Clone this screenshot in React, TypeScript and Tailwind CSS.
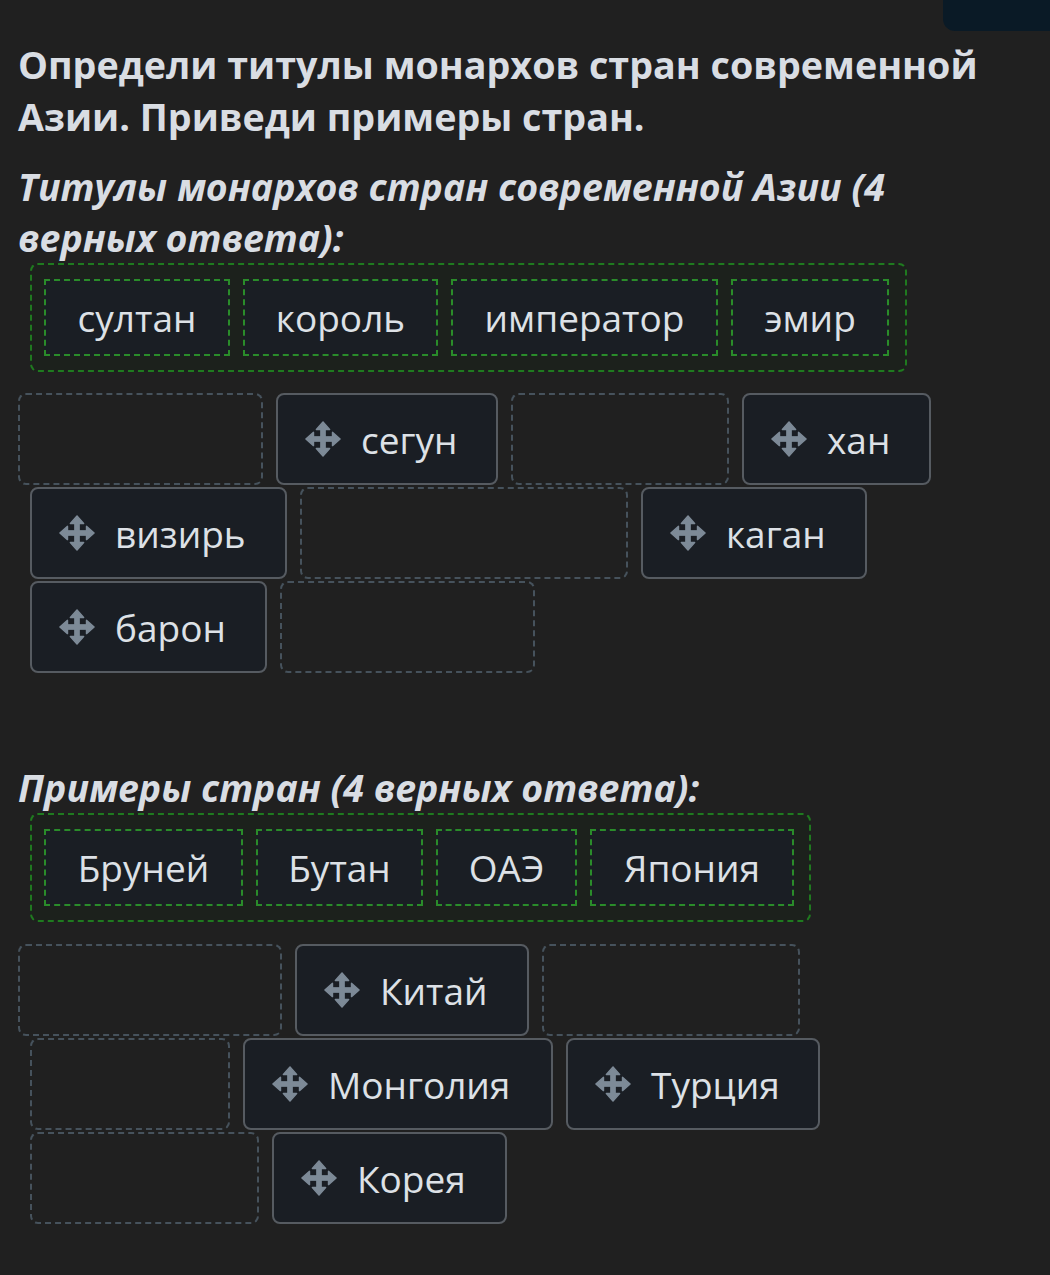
import React from "react";

type Item = { kind: "drop"; w: string } | { kind: "tile"; w: string; label: string };

const titleRows: Item[][] = [
  [
    { kind: "drop", w: "w-[245px]" },
    { kind: "tile", w: "w-[222px]", label: "сегун" },
    { kind: "drop", w: "w-[218px]" },
    { kind: "tile", w: "w-[189px]", label: "хан" },
  ],
  [
    { kind: "tile", w: "w-[257px]", label: "визирь" },
    { kind: "drop", w: "w-[328px]" },
    { kind: "tile", w: "w-[226px]", label: "каган" },
  ],
  [
    { kind: "tile", w: "w-[237px]", label: "барон" },
    { kind: "drop", w: "w-[255px]" },
  ],
];

const countryRows: Item[][] = [
  [
    { kind: "drop", w: "w-[264px]" },
    { kind: "tile", w: "w-[234px]", label: "Китай" },
    { kind: "drop", w: "w-[258px]" },
  ],
  [
    { kind: "drop", w: "w-[200px]" },
    { kind: "tile", w: "w-[310px]", label: "Монголия" },
    { kind: "tile", w: "w-[254px]", label: "Турция" },
  ],
  [
    { kind: "drop", w: "w-[229px]" },
    { kind: "tile", w: "w-[235px]", label: "Корея" },
  ],
];

function MoveIcon() {
  return (
    <svg viewBox="0 0 40 40" className="h-[40px] w-[38px] shrink-0" fill="#7d8a97" stroke="#7d8a97" strokeLinejoin="round" strokeWidth="1.5">
      <rect x="17" y="9" width="6" height="22" stroke="none" />
      <rect x="9" y="17" width="22" height="6" stroke="none" />
      <polygon points="20,2 27,10 13,10" />
      <polygon points="20,38 27,30 13,30" />
      <polygon points="2,20 10,13 10,27" />
      <polygon points="38,20 30,13 30,27" />
    </svg>
  );
}

function Row({ items, first }: { items: Item[]; first?: boolean }) {
  return (
    <div className={`flex h-[92px] gap-[13px] ${first ? "ml-[18px]" : "ml-[30px]"}`}>
      {items.map((it, i) =>
        it.kind === "drop" ? (
          <div key={i} className={`${it.w} h-full rounded-lg border-2 border-dashed border-[#46525c]`} />
        ) : (
          <div
            key={i}
            className={`${it.w} flex h-full items-center gap-[19px] rounded-lg border-2 border-[#565b61] bg-[#1a1e24] pl-[26px]`}
          >
            <MoveIcon />
            <span className="text-[37px] leading-none text-[#dde1e6]">{it.label}</span>
          </div>
        ),
      )}
    </div>
  );
}

function AnswerBox({ w, tiles }: { w: string; tiles: { w: string; label: string }[] }) {
  return (
    <div className={`${w} ml-[30px] flex h-[109px] items-center gap-[13px] rounded-lg border-2 border-dashed border-[#1f7a1f] bg-[#1c211c] px-[12px]`}>
      {tiles.map((t) => (
        <div
          key={t.label}
          className={`${t.w} flex h-[77px] items-center justify-center border-2 border-dashed border-[#2a8c2a] bg-[#1a1e24] text-[37px] text-[#dde1e6]`}
        >
          {t.label}
        </div>
      ))}
    </div>
  );
}

export default function App() {
  return (
    <div className="min-h-[1275px] w-full bg-[#202020] pb-10 font-['Open_Sans',sans-serif]">
      <div className="flex justify-end">
        <div className="h-[31px] w-[107px] rounded-bl-[12px] bg-[#0a1a26]" />
      </div>

      <h1 className="ml-[18px] mt-[8px] text-[37.7px] font-bold leading-[52px] text-[#d9dde3]">
        Определи титулы монархов стран современной
        <br />
        Азии. Приведи примеры стран.
      </h1>

      <h2 className="ml-[18px] mt-[18px] text-[37.5px] font-bold italic leading-[51px] text-[#d9dde3]">
        Титулы монархов стран современной Азии (4
        <br />
        верных ответа):
      </h2>

      <AnswerBox
        w="w-[877px]"
        tiles={[
          { w: "w-[186px]", label: "султан" },
          { w: "w-[195px]", label: "король" },
          { w: "w-[267px]", label: "император" },
          { w: "w-[158px]", label: "эмир" },
        ]}
      />

      <div className="mt-[21px] flex flex-col gap-[2px]">
        {titleRows.map((r, i) => (
          <Row key={i} items={r} first={i === 0} />
        ))}
      </div>

      <h2 className="ml-[18px] mt-[89px] text-[37.5px] font-bold italic leading-[51px] text-[#d9dde3]">
        Примеры стран (4 верных ответа):
      </h2>

      <AnswerBox
        w="w-[781px]"
        tiles={[
          { w: "w-[199px]", label: "Бруней" },
          { w: "w-[167px]", label: "Бутан" },
          { w: "w-[141px]", label: "ОАЭ" },
          { w: "w-[204px]", label: "Япония" },
        ]}
      />

      <div className="mt-[22px] flex flex-col gap-[2px]">
        {countryRows.map((r, i) => (
          <Row key={i} items={r} first={i === 0} />
        ))}
      </div>
    </div>
  );
}
